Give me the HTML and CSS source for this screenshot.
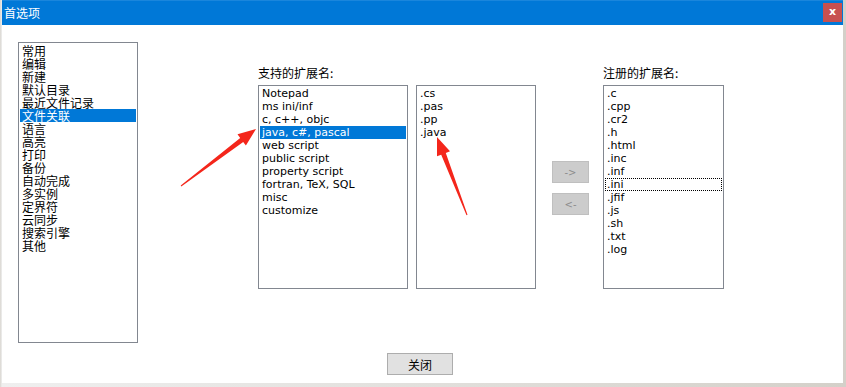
FILE: index.html
```html
<!DOCTYPE html>
<html lang="zh-CN">
<head>
    <meta charset="UTF-8">
    <title>首选项</title>
    <link rel="stylesheet" href="styles.css">
</head>
<body>

    <div class="window">
        <div class="titlebar">
            <span class="title">首选项</span>
            <span class="close">x</span>
        </div>

        <div class="main">
            <ul class="listbox categories">
                <li>常用</li>
                <li>编辑</li>
                <li>新建</li>
                <li>默认目录</li>
                <li>最近文件记录</li>
                <li class="selected">文件关联</li>
                <li>语言</li>
                <li>高亮</li>
                <li>打印</li>
                <li>备份</li>
                <li>自动完成</li>
                <li>多实例</li>
                <li>定界符</li>
                <li>云同步</li>
                <li>搜索引擎</li>
                <li>其他</li>
            </ul>

            <div class="group supported">
                <div class="label">支持的扩展名:</div>
                <div class="pair">
                    <ul class="listbox langs">
                        <li>Notepad</li>
                        <li>ms ini/inf</li>
                        <li>c, c++, objc</li>
                        <li class="selected">java, c#, pascal</li>
                        <li>web script</li>
                        <li>public script</li>
                        <li>property script</li>
                        <li>fortran, TeX, SQL</li>
                        <li>misc</li>
                        <li>customize</li>
                    </ul>
                    <ul class="listbox exts">
                        <li>.cs</li>
                        <li>.pas</li>
                        <li>.pp</li>
                        <li>.java</li>
                    </ul>
                </div>
            </div>

            <div class="movers">
                <button class="move" disabled>-&gt;</button>
                <button class="move" disabled>&lt;-</button>
            </div>

            <div class="group registered">
                <div class="label">注册的扩展名:</div>
                <ul class="listbox regs">
                    <li>.c</li>
                    <li>.cpp</li>
                    <li>.cr2</li>
                    <li>.h</li>
                    <li>.html</li>
                    <li>.inc</li>
                    <li>.inf</li>
                    <li class="focused">.ini</li>
                    <li>.jfif</li>
                    <li>.js</li>
                    <li>.sh</li>
                    <li>.txt</li>
                    <li>.log</li>
                </ul>
            </div>
        </div>

        <div class="footer">
            <button class="closebtn">关闭</button>
        </div>
    </div>

    <svg class="arrows" width="846" height="387" viewBox="0 0 846 387">
        <polygon points="256,129 245.9,145.5 243.2,141.9 181.3,186.4 180.7,185.6 240.2,137.9 237.5,134.3" />
        <polygon points="437,137 450,151.3 445.8,152.9 467.5,214.8 466.5,215.2 441.2,154.7 437,156.3" />
    </svg>

</body>
</html>
```

FILE: styles.css
```css
body {
    margin: 0;
    width: 846px;
    height: 387px;
    position: relative;
    overflow: hidden;
    background: linear-gradient(to right, #d9d6d0 0, #efefef 2px, #d4d0c9 100%);
    font-family: 'DejaVu Sans', 'Noto Sans CJK SC', sans-serif;
    font-size: 11px;
    color: #000000;
}

.window {
    margin-left: 2px;
    width: 841px;
    height: 383px;
    background-color: #ffffff;
    display: flex;
    flex-direction: column;
}

.titlebar {
    height: 25px;
    background-color: #0078d7;
    border-top: 1px solid #1a86dc;
    box-sizing: border-box;
    display: flex;
    align-items: flex-start;
    justify-content: space-between;
}

.title {
    color: #ffffff;
    font-family: 'Noto Sans CJK SC', sans-serif;
    font-size: 12px;
    line-height: 16px;
    margin: 4px 0 0 2px;
}

.close {
    width: 19px;
    height: 19px;
    margin: 2px 1px 0 0;
    background-color: #c75050;
    color: #ffffff;
    font-weight: bold;
    font-size: 11px;
    line-height: 17px;
    text-align: center;
}

.main {
    display: flex;
    align-items: flex-start;
    padding: 17px 0 0 16px;
}

.listbox {
    list-style: none;
    margin: 0;
    padding: 1px;
    border: 1px solid #828790;
    background-color: #ffffff;
    box-sizing: border-box;
}

.listbox li {
    height: 13px;
    line-height: 13px;
    padding-left: 2px;
    white-space: nowrap;
    box-sizing: border-box;
}

.listbox li.selected {
    background-color: #0078d7;
    color: #ffffff;
}

.listbox li.focused {
    border: 1px dotted #000000;
    line-height: 11px;
    padding-left: 1px;
}

.categories {
    width: 120px;
    height: 301px;
    font-family: 'Noto Sans CJK SC', sans-serif;
    font-size: 12px;
}

.label {
    font-family: 'Noto Sans CJK SC', sans-serif;
    font-size: 12px;
    line-height: 13px;
    height: 19px;
}

.group {
    margin-top: 24px;
}

.supported {
    margin-left: 120px;
}

.pair {
    display: flex;
    gap: 8px;
}

.langs {
    width: 150px;
    height: 204px;
}

.exts {
    width: 120px;
    height: 204px;
}

.movers {
    display: flex;
    flex-direction: column;
    gap: 10px;
    margin: 119px 0 0 16px;
}

.move {
    width: 37px;
    height: 22px;
    padding: 0;
    background-color: #cccccc;
    border: 1px solid #bfbfbf;
    color: #8c8c8c;
    font-family: 'DejaVu Sans', sans-serif;
    font-size: 10px;
}

.registered {
    margin-left: 14px;
}

.regs {
    width: 121px;
    height: 204px;
}

.footer {
    padding: 10px 0 0 385px;
}

.closebtn {
    width: 66px;
    height: 22px;
    padding: 0;
    background-color: #e1e1e1;
    border: 1px solid #adadad;
    font-family: 'Noto Sans CJK SC', sans-serif;
    font-size: 12px;
    color: #000000;
}

.arrows {
    position: absolute;
    left: 0;
    top: 0;
    pointer-events: none;
}

.arrows polygon {
    fill: #f4261b;
}
```
